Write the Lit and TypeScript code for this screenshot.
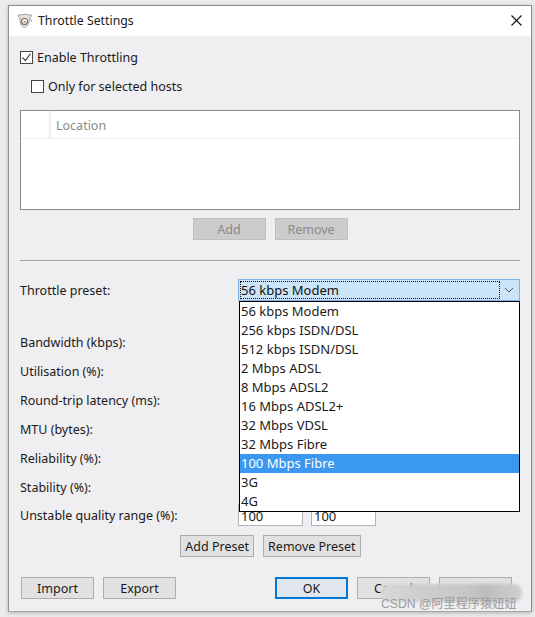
import { LitElement, html, css } from "lit";
import { customElement } from "lit/decorators.js";

const PRESETS = ["56 kbps Modem","256 kbps ISDN/DSL","512 kbps ISDN/DSL","2 Mbps ADSL","8 Mbps ADSL2","16 Mbps ADSL2+","32 Mbps VDSL","32 Mbps Fibre","100 Mbps Fibre","3G","4G"];
const LABELS = ["Bandwidth (kbps):","Utilisation (%):","Round-trip latency (ms):","MTU (bytes):","Reliability (%):","Stability (%):"];

@customElement("app-root")
export class AppRoot extends LitElement {
  static styles = css`
    :host { display: block; width: 535px; height: 617px; overflow: hidden; position: relative; background: #ececec;
      font-family: "Noto Sans", "Liberation Sans", sans-serif; font-size: 12.5px; color: #1a1a1a; }
    .page { box-sizing: border-box; height: 617px; padding: 5px 3px 5px 8px; }
    .win { box-sizing: border-box; height: 607px; border: 1px solid #8f8f8f; border-bottom-color:#a8a8a8; background: #efeef0; position: relative; box-shadow: 0 1px 4px rgba(0,0,0,.25); display: flex; flex-direction: column; }
    .title { box-sizing: border-box; height: 30px; background: #fff; display: flex; align-items: center; padding: 0 9px 1px 8px; gap: 5px; flex: none; font-size: 12.3px; }
    .title span { flex: 1; }
    .body { flex: 1; padding: 0 11px; display: flex; flex-direction: column; }
    .check { display: flex; align-items: center; gap: 4px; height: 20px; }
    .check i { box-sizing: border-box; width: 13px; height: 13px; border: 1px solid #444; background: #fff; display: flex; }
    .c1 { margin-top: 11px; }
    .c2 { margin-top: 9px; margin-left: 11px; }
    .table { box-sizing: border-box; height: 100px; margin-top: 14px; border: 1px solid #8a8a8a; background: #fff; }
    .thead { display: flex; height: 27px; border-bottom: 1px solid #eee; color: #8a8a8a; }
    .thead b { width: 28px; border-right: 2px solid #eee; }
    .thead span { padding-left: 5px; line-height: 30px; }
    .row { display: flex; justify-content: center; gap: 9px; }
    .btn { box-sizing: border-box; width: 73px; height: 22px; border: 1px solid #adadad; background: #e1e1e1; display: flex; align-items: center; justify-content: center; }
    .auto { width: auto; padding: 0 4px; }
    .dis { background: #ccc; border-color: #bfbfbf; color: #8a8a8a; }
    .ok { border: 2px solid #0078d7; background: #e1e6ec; }
    .tools { margin-top: 8px; }
    .sep { border-top: 1px solid #a5a5a5; margin-top: 20px; }
    .preset { display: flex; margin-top: 18px; height: 22px; align-items: center; }
    .preset > span { width: 218px; }
    .combo { box-sizing: border-box; flex: 1; height: 22px; border: 1px solid #7eb4ea; background: #cce4f7; display: flex; padding: 1px; font-size: 13px; }
    .focus { flex: 1; border: 1px dotted #111; line-height: 16px; padding-left: 0; color:#111; }
    .arrow { width: 18px; display: flex; align-items: center; justify-content: center; }
    .fields { margin-top: 31px; display: flex; flex-direction: column; gap: 8px; }
    .field { height: 21px; line-height: 21px; }
    .range { display: flex; height: 22px; align-items: center; margin-top: -2px; }
    .range > span { width: 218px; padding-top: 1px; }
    .range div { box-sizing: border-box; width: 65px; height: 22px; background: #fff; border: 1px solid #b4b4b4; margin-right: 8px; padding: 4px 0 0 2px; line-height: 14px; font-size: 13px; }
    .presets { margin-top: 9px; padding-left: 1px; }
    .foot { display: flex; margin-top: 20px; padding: 0 8px 0 1px; gap: 9px; }
    .grow { flex: 1; }
    .menu { position: absolute; left: 230px; top: 295px; box-sizing: border-box; width: 281px; height: 211px; background: #fff; border: 1px solid #000; font-size: 13px; }
    .menu div { height: 19px; line-height: 18px; padding-left: 1px; }
    .menu .sel { background: #3b98f0; color: #fff; }
    .blur { position: absolute; left: 381px; top: 584px; width: 141px; height: 18px; border-radius: 8px; background: linear-gradient(90deg,#d8d8d8,#cdcdcd 30%,#c6c6c6 60%,#bdbdbd 75%,#d0d0d0); filter: blur(1.5px); }
    .mark { position: absolute; left: 381px; top: 594px; font-size: 12.2px; color: #9c9ca0; font-family: "Liberation Sans", "Noto Sans CJK SC", sans-serif; white-space: nowrap; }
  `;

  render() {
    return html`<div class="page"><div class="win">
      <div class="title">
        <svg width="16" height="16" viewBox="0 0 16 16"><path d="M1 2.500C5 1 10.500 1 15 2.500 14 4 12.800 5 12.500 6.500 12.300 10.500 10.500 13.500 7.500 14.500 4.500 13.800 2.500 10 3 6 2.500 4.800 1.800 3.600 1 2.500z" fill="#e4e2df" stroke="#a5a29e" stroke-width="1"/><path d="M12.500 5.500C14 6 15 7 14 9" fill="none" stroke="#a5a29e"/><circle cx="7.500" cy="8.500" r="3" fill="#fff" stroke="#75665a" stroke-width="1.100"/><circle cx="7.500" cy="9" r="1" fill="#b6762d"/></svg>
        <span>Throttle Settings</span>
        <svg width="11" height="11" viewBox="0 0 11 11"><path d="M.5.500l10 10M10.500.500l-10 10" stroke="#111" stroke-width="1.100" fill="none"/></svg>
      </div>
      <div class="body">
        <div class="check c1"><i><svg width="11" height="11" viewBox="0 0 11 11"><path d="M1.500 5.500l3 3 5-7" stroke="#444" stroke-width="1.200" fill="none"/></svg></i>Enable Throttling</div>
        <div class="check c2"><i></i>Only for selected hosts</div>
        <div class="table"><div class="thead"><b></b><span>Location</span></div></div>
        <div class="row tools"><div class="btn dis">Add</div><div class="btn dis">Remove</div></div>
        <div class="sep"></div>
        <div class="preset"><span>Throttle preset:</span>
          <div class="combo"><div class="focus">56 kbps Modem</div><div class="arrow"><svg width="10" height="6" viewBox="0 0 10 6"><path d="M1 1l4 4 4-4" stroke="#555" fill="none"/></svg></div></div>
        </div>
        <div class="fields">${LABELS.map(l => html`<div class="field">${l}</div>`)}
          <div class="range"><span>Unstable quality range (%):</span><div>100</div><div>100</div></div>
        </div>
        <div class="row presets"><div class="btn auto">Add Preset</div><div class="btn auto">Remove Preset</div></div>
        <div class="foot">
          <div class="btn">Import</div><div class="btn">Export</div><div class="grow"></div>
          <div class="btn ok">OK</div><div class="btn">Cancel</div><div class="btn"></div>
        </div>
      </div>
      <div class="menu">${PRESETS.map(p => html`<div class=${p === "100 Mbps Fibre" ? "sel" : ""}>${p}</div>`)}</div>
    </div></div>
    <div class="blur"></div>
    <div class="mark">CSDN @阿里程序猿妞妞</div>`;
  }
}
